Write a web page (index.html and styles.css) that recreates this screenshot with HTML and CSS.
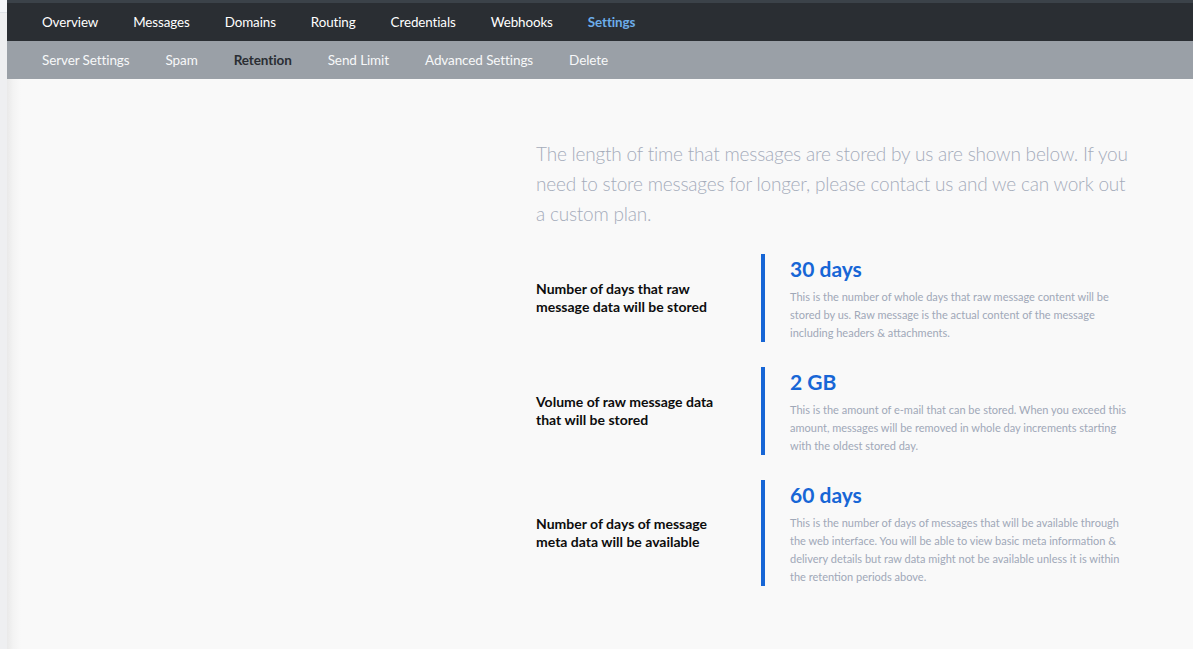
FILE: index.html
```html
<!DOCTYPE html>
<html lang="en">
<head>
<meta charset="utf-8">
<title>Retention</title>
<link rel="stylesheet" href="styles.css">
</head>
<body>
<div class="frame">
  <aside class="side">
    <div class="side-top"></div>
  </aside>
  <main class="app">
    <div class="topstrip"></div>
    <nav class="nav">
      <a class="nav-item">Overview</a>
      <a class="nav-item">Messages</a>
      <a class="nav-item">Domains</a>
      <a class="nav-item">Routing</a>
      <a class="nav-item">Credentials</a>
      <a class="nav-item">Webhooks</a>
      <a class="nav-item is-active">Settings</a>
    </nav>
    <nav class="subnav">
      <a class="sub-item">Server Settings</a>
      <a class="sub-item">Spam</a>
      <a class="sub-item is-active">Retention</a>
      <a class="sub-item">Send Limit</a>
      <a class="sub-item">Advanced Settings</a>
      <a class="sub-item">Delete</a>
    </nav>
    <section class="content">
      <div class="panel">
        <p class="intro">The length of time that messages are stored by us are shown below. If you need to store messages for longer, please contact us and we can work out a custom plan.</p>
        <div class="rows">
          <div class="row">
            <div class="label">Number of days that raw message data will be stored</div>
            <div class="value">
              <div class="big">30 days</div>
              <p class="desc">This is the number of whole days that raw message content will be stored by us. Raw message is the actual content of the message including headers &amp; attachments.</p>
            </div>
          </div>
          <div class="row">
            <div class="label">Volume of raw message data that will be stored</div>
            <div class="value">
              <div class="big">2 GB</div>
              <p class="desc">This is the amount of e-mail that can be stored. When you exceed this amount, messages will be removed in whole day increments starting with the oldest stored day.</p>
            </div>
          </div>
          <div class="row">
            <div class="label">Number of days of message meta data will be available</div>
            <div class="value">
              <div class="big">60 days</div>
              <p class="desc">This is the number of days of messages that will be available through the web interface. You will be able to view basic meta information &amp; delivery details but raw data might not be available unless it is within the retention periods above.</p>
            </div>
          </div>
        </div>
      </div>
    </section>
  </main>
</div>
</body>
</html>
```
FILE: styles.css
```css
* { box-sizing: border-box; }
html, body { margin: 0; padding: 0; height: 100%; }
body {
  font-family: "Lato", "Noto Sans", sans-serif;
  background: #f9f9f9;
  overflow: hidden;
}
.frame {
  display: flex;
  height: 649px;
}
.side {
  width: 7px;
  flex: 0 0 7px;
  background: #eeeff1;
}
.side-top {
  height: 13px;
  background: #f4f6f9;
  border-bottom: 1px solid #dfe3e8;
}
.app {
  flex: 1;
  display: flex;
  flex-direction: column;
  background: #f9f9f9;
  min-width: 0;
}
.topstrip {
  height: 3px;
  background: #3b4249;
}
.nav {
  height: 38px;
  background: #2a2e33;
  display: flex;
  align-items: center;
  gap: 35px;
  padding-left: 35px;
}
.nav-item {
  color: #ffffff;
  font-size: 13.4px;
  letter-spacing: -0.1px;
}
.nav-item.is-active {
  color: #6cadea;
  font-weight: 700;
}
.subnav {
  height: 38px;
  background: #9aa0a7;
  display: flex;
  align-items: center;
  gap: 36px;
  padding-left: 35px;
}
.sub-item {
  color: #f7f8f9;
  font-size: 13.5px;
  letter-spacing: -0.1px;
}
.sub-item.is-active {
  color: #2a2e33;
  font-weight: 700;
}
.content {
  flex: 1;
  background: linear-gradient(to right, #e9e9e9 0, #f3f3f3 6px, #f9f9f9 14px);
  padding-top: 60px;
  padding-left: 529px;
}
.panel {
  width: 600px;
}
.intro {
  margin: 0;
  font-size: 19px;
  font-weight: 300;
  line-height: 30px;
  color: #a5acbb;
  letter-spacing: -0.2px;
}
.rows {
  margin-top: 25px;
  display: flex;
  flex-direction: column;
  gap: 25px;
}
.row {
  display: flex;
  align-items: center;
}
.label {
  width: 225px;
  flex: 0 0 225px;
  padding-right: 30px;
  font-size: 14px;
  font-weight: 700;
  line-height: 18px;
  color: #0d0d0d;
}
.value {
  flex: 1;
  border-left: 4px solid #1766d6;
  padding-left: 25px;
}
.big {
  font-size: 21px;
  font-weight: 700;
  line-height: 30px;
  color: #1766d6;
}
.desc {
  margin: 4px 0 0;
  font-size: 11px;
  line-height: 18px;
  color: #a0a8b8;
}
```
